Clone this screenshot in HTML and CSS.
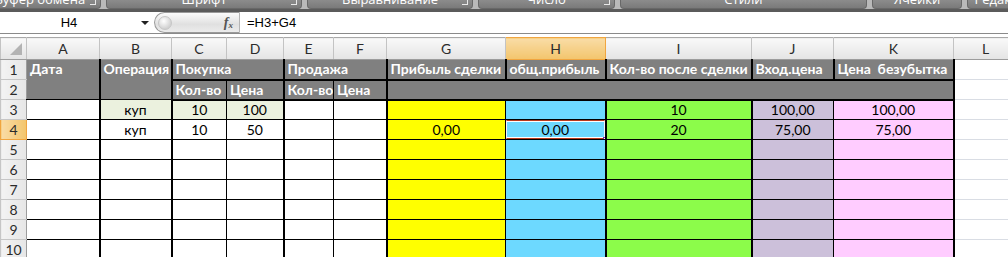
FILE: index.html
```
<!DOCTYPE html>
<html lang="ru">
<head>
    <meta charset="UTF-8">
    <title>Книга1 - Excel</title>
    <link rel="stylesheet" href="styles.css">
</head>
<body>
    <!-- Низ ленты -->
    <div class="ribbon">
        <div class="grp grp1"><span>Буфер обмена</span><i class="launch"></i></div>
        <div class="grp grp2"><span>Шрифт</span><i class="launch"></i></div>
        <div class="grp grp3"><span>Выравнивание</span><i class="launch"></i></div>
        <div class="grp grp4"><span>Число</span><i class="launch"></i></div>
        <div class="grp grp5"><span>Стили</span></div>
        <div class="grp grp6"><span>Ячейки</span></div>
        <div class="grp grp7"><span>Редактирование</span></div>
    </div>

    <!-- Строка формул -->
    <div class="fbar">
        <div class="namebox">
            <span class="name">H4</span>
            <span class="arrow"></span>
        </div>
        <div class="fx-pill">
            <span class="knob"></span>
            <span class="fx">f<sub>x</sub></span>
        </div>
        <div class="formula">=H3+G4</div>
    </div>

    <!-- Лист -->
    <table class="sheet">
        <colgroup>
            <col class="w-rh"><col class="w-a"><col class="w-b"><col class="w-c"><col class="w-d">
            <col class="w-e"><col class="w-f"><col class="w-g"><col class="w-h"><col class="w-i">
            <col class="w-j"><col class="w-k"><col class="w-l">
        </colgroup>
        <tr class="colhead">
            <th class="corner"><svg width="26" height="21"><polygon points="21,5 21,17 9,17" fill="#b3b3b3"/></svg></th>
            <th>A</th><th>B</th><th>C</th><th>D</th><th>E</th><th>F</th><th>G</th>
            <th class="sel">H</th><th>I</th><th>J</th><th>K</th><th>L</th>
        </tr>
        <tr>
            <th class="rh">1</th>
            <td class="hd cA top-l" rowspan="2">Дата</td>
            <td class="hd cB top-c" rowspan="2">Операция</td>
            <td class="hd cC bb" colspan="2">Покупка</td>
            <td class="hd cE bb" colspan="2">Продажа</td>
            <td class="hd cG bb">Прибыль сделки</td>
            <td class="hd cH tl bb">общ.прибыль</td>
            <td class="hd cI bb">Кол-во после сделки</td>
            <td class="hd cJ bb">Вход.цена</td>
            <td class="hd cK tl bb">Цена&nbsp; безубытка</td>
            <td class="cL"></td>
        </tr>
        <tr>
            <th class="rh">2</th>
            <td class="hd cC bb">Кол-во</td>
            <td class="hd cD bb">Цена</td>
            <td class="hd cE bb">Кол-во</td>
            <td class="hd cF bb">Цена</td>
            <td class="hd cG bb" colspan="5"></td>
            <td class="cL"></td>
        </tr>
        <tr>
            <th class="rh">3</th>
            <td class="cA"></td>
            <td class="cB lt">куп</td>
            <td class="cC lt">10</td>
            <td class="cD lt">100</td>
            <td class="cE"></td>
            <td class="cF"></td>
            <td class="cG y"></td>
            <td class="cH b"></td>
            <td class="cI g">10</td>
            <td class="cJ l">100,00</td>
            <td class="cK p">100,00</td>
            <td class="cL"></td>
        </tr>
        <tr>
            <th class="rh sel">4</th>
            <td class="cA"></td>
            <td class="cB">куп</td>
            <td class="cC">10</td>
            <td class="cD">50</td>
            <td class="cE"></td>
            <td class="cF"></td>
            <td class="cG y">0,00</td>
            <td class="cH b active"><span class="frame"></span><span class="handle"></span>0,00</td>
            <td class="cI g">20</td>
            <td class="cJ l">75,00</td>
            <td class="cK p">75,00</td>
            <td class="cL"></td>
        </tr>
        <tr>
            <th class="rh">5</th>
            <td class="cA"></td><td class="cB"></td><td class="cC"></td><td class="cD"></td><td class="cE"></td><td class="cF"></td>
            <td class="cG y"></td><td class="cH b"></td><td class="cI g"></td><td class="cJ l"></td><td class="cK p"></td><td class="cL"></td>
        </tr>
        <tr>
            <th class="rh">6</th>
            <td class="cA"></td><td class="cB"></td><td class="cC"></td><td class="cD"></td><td class="cE"></td><td class="cF"></td>
            <td class="cG y"></td><td class="cH b"></td><td class="cI g"></td><td class="cJ l"></td><td class="cK p"></td><td class="cL"></td>
        </tr>
        <tr>
            <th class="rh">7</th>
            <td class="cA"></td><td class="cB"></td><td class="cC"></td><td class="cD"></td><td class="cE"></td><td class="cF"></td>
            <td class="cG y"></td><td class="cH b"></td><td class="cI g"></td><td class="cJ l"></td><td class="cK p"></td><td class="cL"></td>
        </tr>
        <tr>
            <th class="rh">8</th>
            <td class="cA"></td><td class="cB"></td><td class="cC"></td><td class="cD"></td><td class="cE"></td><td class="cF"></td>
            <td class="cG y"></td><td class="cH b"></td><td class="cI g"></td><td class="cJ l"></td><td class="cK p"></td><td class="cL"></td>
        </tr>
        <tr>
            <th class="rh">9</th>
            <td class="cA"></td><td class="cB"></td><td class="cC"></td><td class="cD"></td><td class="cE"></td><td class="cF"></td>
            <td class="cG y"></td><td class="cH b"></td><td class="cI g"></td><td class="cJ l"></td><td class="cK p"></td><td class="cL"></td>
        </tr>
        <tr>
            <th class="rh">10</th>
            <td class="cA"></td><td class="cB"></td><td class="cC"></td><td class="cD"></td><td class="cE"></td><td class="cF"></td>
            <td class="cG y"></td><td class="cH b"></td><td class="cI g"></td><td class="cJ l"></td><td class="cK p"></td><td class="cL"></td>
        </tr>
    </table>
</body>
</html>
```

FILE: styles.css
```
* {
    margin: 0;
    padding: 0;
    box-sizing: border-box;
}

body {
    width: 1008px;
    height: 257px;
    overflow: hidden;
    background: #fff;
    font-family: Lato, "Open Sans", sans-serif;
    font-size: 14px;
    color: #000;
}

/* Низ ленты */
.ribbon {
    height: 12px;
    display: flex;
    gap: 5px;
    background: #b9b9b9;
    border-bottom: 3px solid #5b5b5b;
    overflow: hidden;
}

.grp {
    position: relative;
    height: 9px;
    flex: none;
    overflow: hidden;
    background: linear-gradient(#8c8c8c, #7a7a7a);
    border: 1px solid #686868;
    border-top: none;
    border-radius: 0 0 4px 4px;
    color: #fff;
    text-align: center;
}

.grp span {
    display: block;
    margin-top: -9px;
    line-height: 16px;
    font-family: "Open Sans", sans-serif;
    font-size: 13px;
}

.grp .launch {
    position: absolute;
    right: 4px;
    top: 0;
    width: 6px;
    height: 5px;
    border-right: 1px solid #e8e8e8;
    border-bottom: 1px solid #e8e8e8;
}

.grp1 { width: 122px; margin-left: -21px; }
.grp2 { width: 196px; }
.grp3 { width: 166px; }
.grp4 { width: 137px; }
.grp5 { width: 247px; }
.grp6 { width: 90px; }
.grp7 { width: 120px; }

/* Строка формул */
.fbar {
    height: 22px;
    display: flex;
    border-bottom: 1px solid #8a8a8a;
}

.namebox {
    width: 154px;
    display: flex;
    align-items: center;
}

.name {
    width: 138px;
    text-align: center;
    font-family: "Liberation Sans", sans-serif;
    font-size: 13px;
}

.arrow {
    border-left: 4px solid transparent;
    border-right: 4px solid transparent;
    border-top: 4px solid #222;
    margin-left: 3px;
}

.fx-pill {
    width: 86px;
    display: flex;
    align-items: center;
    justify-content: space-between;
    background: linear-gradient(#fbfbfb, #e0e0e0 60%, #ececec);
    border: 1px solid #9a9a9a;
    border-right: 1px solid #b5b5b5;
    border-radius: 11px 0 0 11px;
    padding: 0 6px 0 3px;
}

.knob {
    width: 14px;
    height: 14px;
    border-radius: 50%;
    background: radial-gradient(circle at 40% 35%, #ffffff, #d2d2d2 70%);
    border: 1px solid #c6c6c6;
}

.fx {
    font-family: "Liberation Serif", serif;
    font-style: italic;
    font-weight: bold;
    font-size: 14px;
    color: #555;
}

.fx sub {
    font-size: 9px;
    vertical-align: -1px;
}

.formula {
    flex: 1;
    padding-left: 7px;
    line-height: 21px;
    font-family: "Liberation Sans", sans-serif;
    font-size: 13px;
}

/* Лист */
.sheet {
    margin-top: 3px;
    border-collapse: collapse;
    table-layout: fixed;
    width: 1017px;
}

.w-rh { width: 26px; }
.w-a { width: 73px; }
.w-b { width: 72px; }
.w-c { width: 55px; }
.w-d { width: 57px; }
.w-e { width: 50px; }
.w-f { width: 53px; }
.w-g { width: 119px; }
.w-h { width: 100px; }
.w-i { width: 146px; }
.w-j { width: 82px; }
.w-k { width: 120px; }
.w-l { width: 64px; }

.sheet tr {
    height: 20px;
}

.sheet tr.colhead {
    height: 21px;
}

.colhead th {
    font-weight: normal;
    color: #2b2b2b;
    background: linear-gradient(#f9f9f9, #e4e4e4);
    border: 1px solid #c3c3c3;
    border-top-color: #a8a8a8;
    border-bottom-color: #9c9c9c;
}

.colhead th.sel {
    background: linear-gradient(#f9dca6, #f3c56c);
    border-color: #f0a540;
}

.colhead .corner {
    padding: 0;
    line-height: 0;
}

.rh {
    font-weight: normal;
    color: #2b2b2b;
    background: linear-gradient(90deg, #f3f3f3, #e6e6e6);
    border: 1px solid #c6c6c6;
    border-right-color: #9c9c9c;
}

.rh.sel {
    background: linear-gradient(90deg, #f9dca6, #f3c56c);
    border-color: #f0a540;
}

.sheet td {
    border: 1px solid #000;
    text-align: center;
    padding: 0 2px;
    white-space: nowrap;
    overflow: hidden;
    line-height: 18px;
}

/* Рамки по столбцам */
.sheet td.cA { border-left: 1px solid #9c9c9c; }
.sheet td.cB,
.sheet td.cC,
.sheet td.cE,
.sheet td.cG,
.sheet td.cI,
.sheet td.cJ { border-left: 2px solid #000; }
.sheet td.cK { border-right: 2px solid #000; }
.sheet td.cL {
    border: 1px solid #d9dde4;
    border-left: 2px solid #000;
}

/* Шапка */
.sheet td.hd {
    background: #808080;
    color: #fff;
    font-weight: bold;
    text-align: left;
    padding-left: 3px;
}

.sheet td.hd.bb { border-bottom: 2px solid #000; }
.sheet td.hd.tl { border-left: 2px solid #000; }
.sheet td.top-l { vertical-align: top; }
.sheet td.top-c {
    vertical-align: top;
    text-align: center;
}

/* Заливки */
.lt { background: #ebf1de; }
.y { background: #ffff00; }
.b { background: #6dd9ff; }
.g { background: #8cfc4a; }
.l { background: #ccc0da; }
.p { background: #ffccff; }

/* Активная ячейка */
.sheet td.active {
    position: relative;
}

.frame {
    position: absolute;
    left: -1px;
    top: -1px;
    right: -1px;
    bottom: -1px;
    border: 2px solid #b8391c;
    border-left-color: #f4f0fa;
    border-right-color: #f4f0fa;
    box-shadow: inset 0 1px 0 #fff, inset 0 -1px 0 #fff;
}

.handle {
    position: absolute;
    right: -3px;
    bottom: -3px;
    width: 5px;
    height: 5px;
    background: #fff;
    border: 1px solid #7a2fa0;
}
```
